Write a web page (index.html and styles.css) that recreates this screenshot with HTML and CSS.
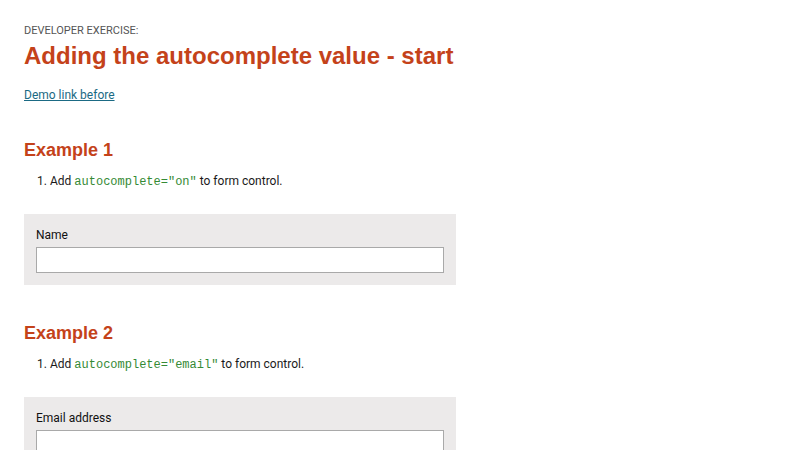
FILE: index.html
```html
<!DOCTYPE html>
<html lang="en">
<head>
<meta charset="utf-8">
<title>Adding the autocomplete value - start</title>
<link rel="stylesheet" href="styles.css">
</head>
<body>
<main class="page">
  <p class="eyebrow">DEVELOPER EXERCISE:</p>
  <h1 class="title">Adding the autocomplete value - start</h1>
  <p class="demo"><a href="#" class="demo-link">Demo link before</a></p>

  <section class="example">
    <h2 class="example-title">Example 1</h2>
    <ol class="steps">
      <li>Add <code class="code">autocomplete="on"</code> to form control.</li>
    </ol>
    <div class="field-box">
      <label class="field-label" for="name">Name</label>
      <input class="field-input" id="name" type="text">
    </div>
  </section>

  <section class="example">
    <h2 class="example-title">Example 2</h2>
    <ol class="steps">
      <li>Add <code class="code">autocomplete="email"</code> to form control.</li>
    </ol>
    <div class="field-box">
      <label class="field-label" for="email">Email address</label>
      <input class="field-input" id="email" type="text">
    </div>
  </section>
</main>
</body>
</html>
```
FILE: styles.css
```css
html, body {
  margin: 0;
  padding: 0;
  background: #ffffff;
}
body {
  font-family: Roboto, "Liberation Sans", sans-serif;
  font-size: 12px;
  color: #1a1a1a;
}
.page {
  padding: 24px 24px 0 24px;
  width: 432px;
}
.eyebrow {
  margin: 0;
  font-size: 11px;
  line-height: 14px;
  color: #555555;
}
.title {
  margin: 2px 0 0 0;
  font-family: "Liberation Sans", Arial, sans-serif;
  font-weight: bold;
  font-size: 24px;
  line-height: 32px;
  color: #c4421a;
  white-space: nowrap;
}
.demo {
  margin: 14px 0 0 0;
  font-size: 12px;
  line-height: 18px;
}
.demo-link {
  color: #1b6a84;
  text-decoration: underline;
}
.example {
  margin-top: 34px;
}
.example + .example {
  margin-top: 36px;
}
.example-title {
  margin: 0;
  font-family: "Liberation Sans", Arial, sans-serif;
  font-weight: bold;
  font-size: 18px;
  line-height: 24px;
  color: #c4421a;
}
.steps {
  margin: 10px 0 0 0;
  padding-left: 26px;
  font-size: 12px;
  line-height: 18px;
}
.code {
  font-family: "Liberation Mono", "Courier New", monospace;
  font-size: 12px;
  color: #358a35;
}
.field-box {
  margin-top: 23px;
  background: #eceaea;
  padding: 13px 12px 12px 12px;
  display: flex;
  flex-direction: column;
}
.field-label {
  font-size: 12px;
  line-height: 16px;
  margin-bottom: 4px;
  color: #111111;
}
.field-input {
  height: 26px;
  box-sizing: border-box;
  border: 1px solid #a9a9a9;
  background: #ffffff;
  margin: 0;
  padding: 0 4px;
  font-family: Roboto, sans-serif;
  font-size: 13px;
}
```
